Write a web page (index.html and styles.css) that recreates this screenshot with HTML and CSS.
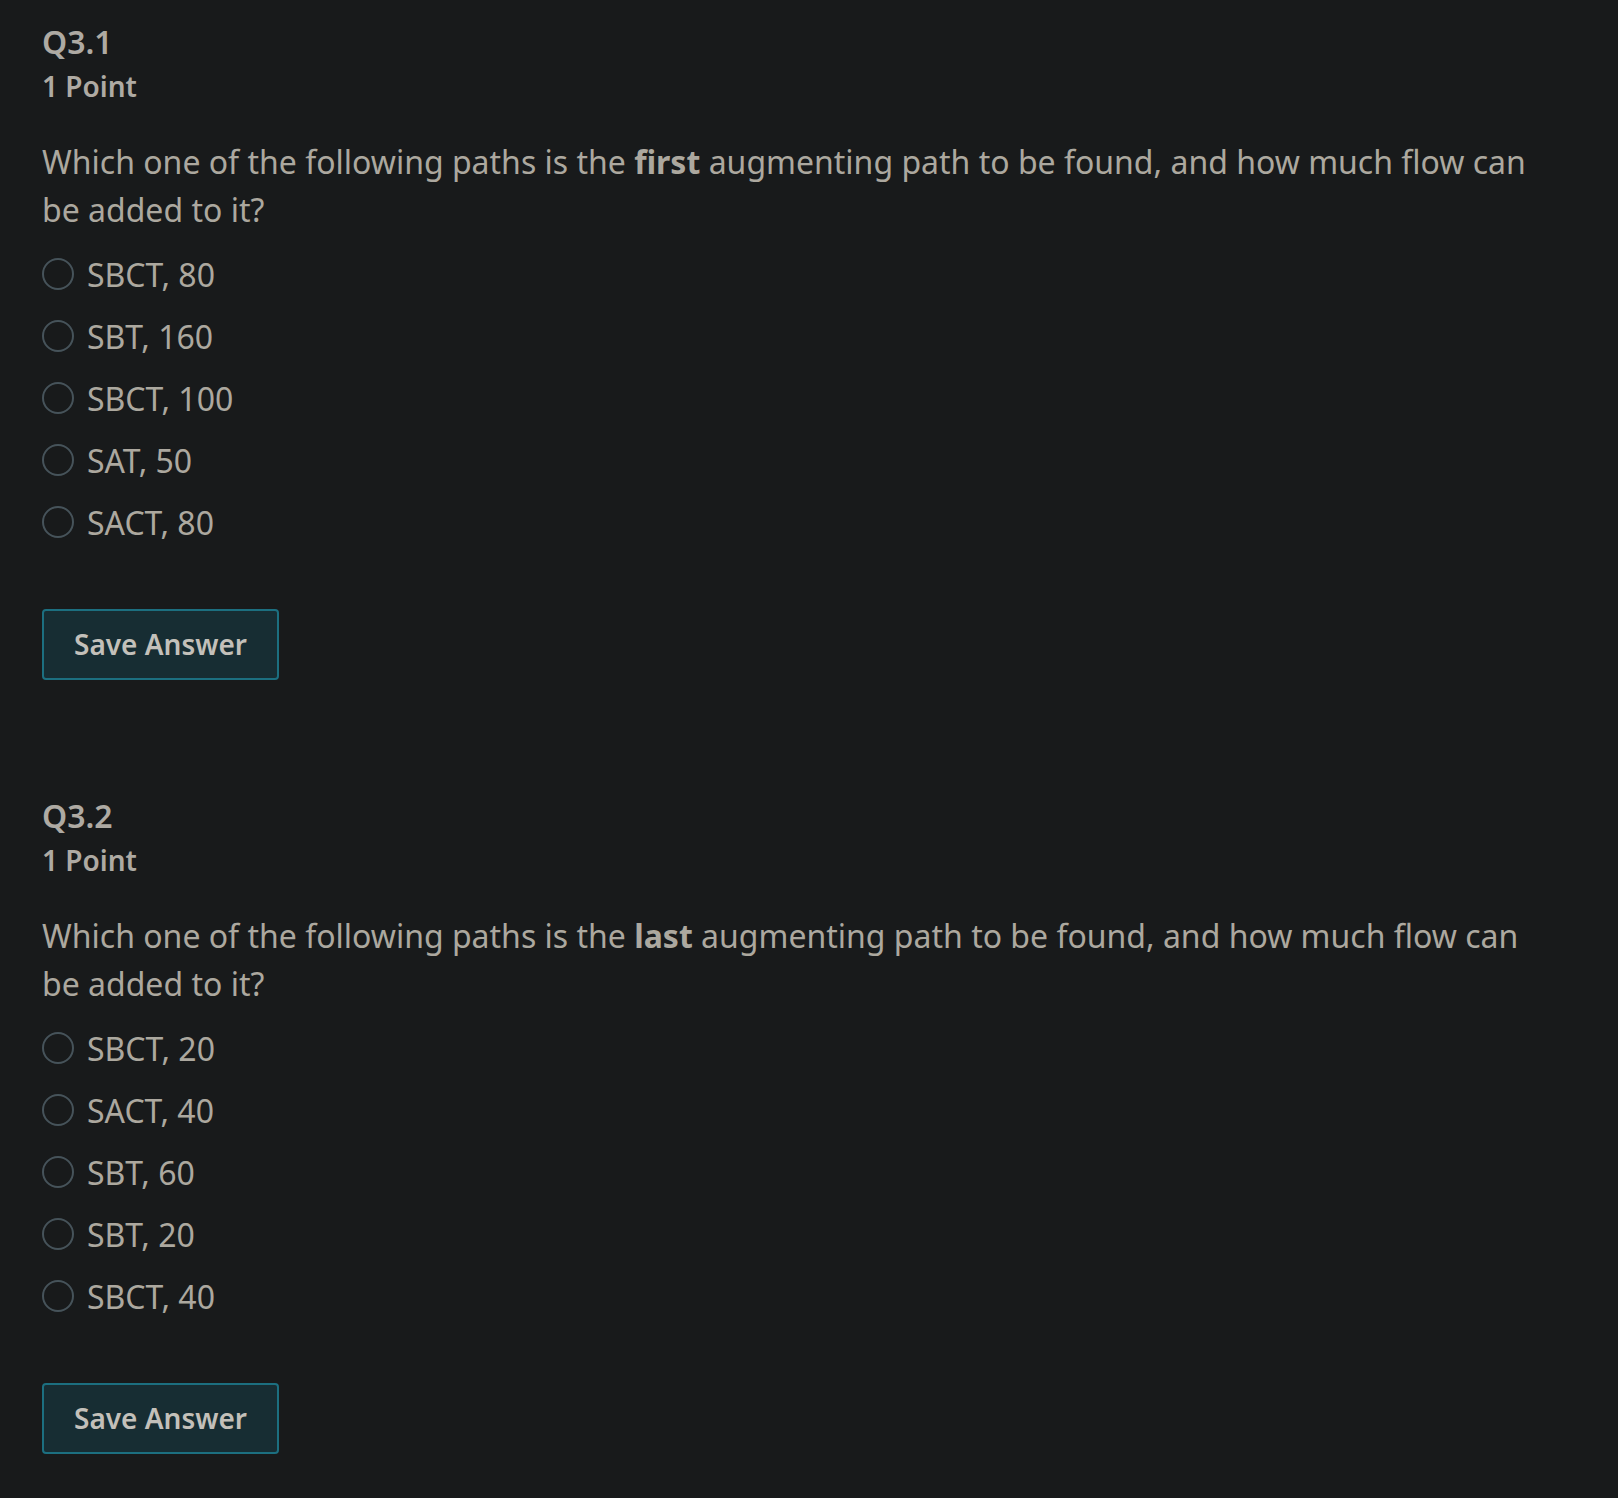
FILE: index.html
```html
<!DOCTYPE html>
<html lang="en">
<head>
<meta charset="utf-8">
<title>Q3</title>
<link rel="stylesheet" href="styles.css">
</head>
<body>
<main class="page">
  <section class="question">
    <h2 class="q-title">Q3.1</h2>
    <div class="q-points">1 Point</div>
    <p class="q-text">Which one of the following paths is the <strong>first</strong> augmenting path to be found, and how much flow can be added to it?</p>
    <div class="options">
      <label class="option"><input type="radio" name="q31" class="radio"><span>SBCT, 80</span></label>
      <label class="option"><input type="radio" name="q31" class="radio"><span>SBT, 160</span></label>
      <label class="option"><input type="radio" name="q31" class="radio"><span>SBCT, 100</span></label>
      <label class="option"><input type="radio" name="q31" class="radio"><span>SAT, 50</span></label>
      <label class="option"><input type="radio" name="q31" class="radio"><span>SACT, 80</span></label>
    </div>
    <button class="save-btn" type="button">Save Answer</button>
  </section>
  <section class="question">
    <h2 class="q-title">Q3.2</h2>
    <div class="q-points">1 Point</div>
    <p class="q-text">Which one of the following paths is the <strong>last</strong> augmenting path to be found, and how much flow can be added to it?</p>
    <div class="options">
      <label class="option"><input type="radio" name="q32" class="radio"><span>SBCT, 20</span></label>
      <label class="option"><input type="radio" name="q32" class="radio"><span>SACT, 40</span></label>
      <label class="option"><input type="radio" name="q32" class="radio"><span>SBT, 60</span></label>
      <label class="option"><input type="radio" name="q32" class="radio"><span>SBT, 20</span></label>
      <label class="option"><input type="radio" name="q32" class="radio"><span>SBCT, 40</span></label>
    </div>
    <button class="save-btn" type="button">Save Answer</button>
  </section>
</main>
</body>
</html>
```

FILE: styles.css
```css
html, body {
  margin: 0;
  padding: 0;
  background: #181a1b;
}

body {
  font-family: "Noto Sans", "Open Sans", sans-serif;
  color: #aca89f;
  min-height: 1498px;
}

.page {
  padding: 0 42px;
  width: 1500px;
}

.question {
  padding-top: 24px;
  display: flex;
  flex-direction: column;
  align-items: flex-start;
}

.question + .question {
  padding-top: 118px;
}

.q-title {
  margin: 0;
  font-size: 32px;
  line-height: 36px;
  font-weight: 600;
  color: #aeaaa3;
}

.q-points {
  margin-top: 10px;
  font-size: 28px;
  line-height: 32px;
  font-weight: 600;
  color: #aeaaa3;
}

.q-text {
  margin: 36px 0 0;
  font-size: 32px;
  line-height: 48px;
}

.q-text strong {
  font-weight: 700;
}

.options {
  margin-top: 17px;
  display: flex;
  flex-direction: column;
  gap: 14px;
}

.option {
  display: flex;
  align-items: center;
  gap: 13px;
  font-size: 32px;
  line-height: 48px;
  cursor: pointer;
}

.radio {
  appearance: none;
  -webkit-appearance: none;
  margin: 0 0 3px;
  width: 32px;
  height: 32px;
  border: 2px solid #46535a;
  border-radius: 50%;
  background: transparent;
  box-sizing: border-box;
}

.save-btn {
  margin-top: 62px;
  box-sizing: border-box;
  height: 71px;
  padding: 0 30px;
  border: 2px solid #1c6f80;
  border-radius: 4px;
  background: #172d33;
  color: #c3c0ba;
  font-family: "Noto Sans", "Open Sans", sans-serif;
  font-size: 28px;
  font-weight: 600;
  line-height: 67px;
  cursor: pointer;
}
```
